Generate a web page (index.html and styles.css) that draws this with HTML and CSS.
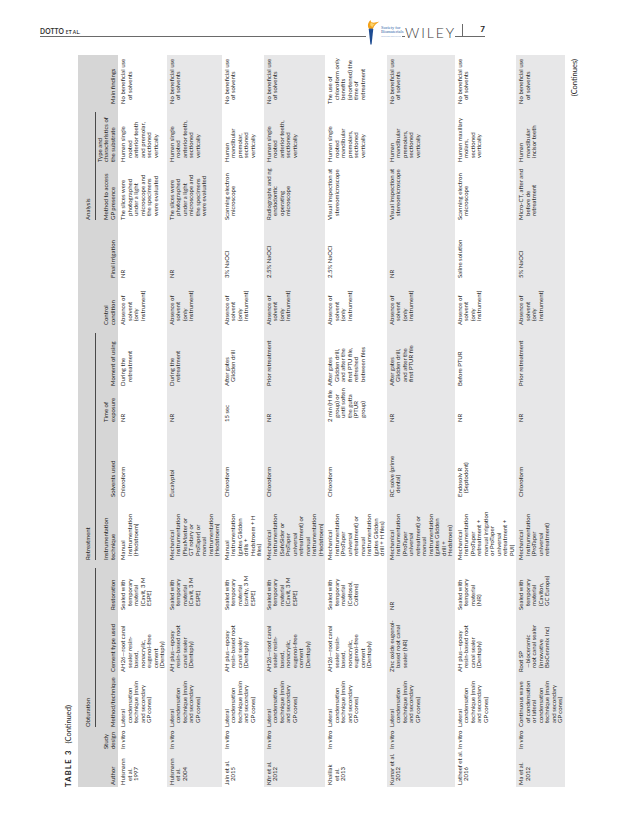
FILE: index.html
```html
<!DOCTYPE html>
<html lang="en">
<head>
<meta charset="utf-8">
<title>Dotto et al. — Table 3 (Continued)</title>
<link rel="stylesheet" href="styles.css">
</head>
<body>
<header class="runhead">
  <div class="rh-left">DOTTO <span class="sc">ET AL.</span></div>
  <svg class="torch" width="14" height="26" viewBox="0 0 14 26" aria-hidden="true">
    <path d="M3.2 10.2 C1.2 7.4 1.6 3.6 4.6 1 C4.4 3.8 7.4 4.6 13.4 2.6 C10.6 4.6 8 6.2 6.8 10.2 Z" fill="#f3a21b"/>
    <path d="M4.4 6.4 C4 4.8 4.6 3.6 5.4 3 C5.6 4.6 7.4 5 9.6 4.6 C8 5.8 7 6.8 6.4 8.2 Z" fill="#fcd36a"/>
    <ellipse cx="5" cy="10.4" rx="2.4" ry="0.9" fill="#2a5fa8"/>
    <path d="M2.8 10.4 L7.2 10.4 L5.6 25.6 L4.4 25.6 Z" fill="#1d4b91"/>
  </svg>
  <div class="society"><span>Society for</span><span>Biomaterials</span><span class="tag">Inspiring Innovation</span></div>
  <div class="dash d1"></div>
  <div class="wiley">WILEY</div>
  <div class="dash d2"></div>
  <div class="rh-right"><span class="pg">7</span></div>
</header>

<main class="landscape">
  <div class="sheet">
    <div class="caption"><span class="tno">TABLE 3</span><span class="cont">(Continued)</span></div>
    <table class="tbl">
      <colgroup>
        <col style="width:36px"><col style="width:22px"><col style="width:55px"><col style="width:62px">
        <col style="width:50px"><col style="width:63px"><col style="width:75px"><col style="width:36px">
        <col style="width:61px"><col style="width:47px"><col style="width:58px"><col style="width:58px">
        <col style="width:58px"><col style="width:51px">
      </colgroup>
      <thead>
        <tr class="hg">
          <th rowspan="2" class="h">Author</th>
          <th rowspan="2" class="h">Study<br>design</th>
          <th colspan="3" class="g"><div class="gl">Obturation</div></th>
          <th colspan="4" class="g"><div class="gl">Retreatment</div></th>
          <th rowspan="2" class="h">Control<br>condition</th>
          <th rowspan="2" class="h">Final irrigation</th>
          <th colspan="2" class="g"><div class="gl">Analysis</div></th>
          <th rowspan="2" class="h">Main findings</th>
        </tr>
        <tr class="hl">
          <th class="h">Method/technique</th>
          <th class="h">Cement type used</th>
          <th class="h">Restoration</th>
          <th class="h">Instrumentation<br>technique</th>
          <th class="h">Solvents used</th>
          <th class="h">Time of<br>exposure</th>
          <th class="h">Moment of using</th>
          <th class="h">Method to access<br>GP presence</th>
          <th class="h">Type and<br>characteristics of<br>the substrate</th>
        </tr>
      </thead>
      <tbody>
        <tr>
          <td>Hulsmann<br>et al.<br>1997</td>
          <td>In vitro</td>
          <td>Lateral<br>condensation<br>technique (main<br>and secondary<br>GP cones)</td>
          <td>AH26—root canal<br>sealer resin-<br>based,<br>nonacrylic,<br>eugenol-free<br>cement<br>(Dentsply)</td>
          <td>Sealed with<br>temporary<br>material<br>(Cavit, 3 M<br>ESPE)</td>
          <td>Manual<br>instrumentation<br>(Hedstroem)</td>
          <td>Chloroform</td>
          <td>NR</td>
          <td>During the<br>retreatment</td>
          <td>Absence of<br>solvent<br>(only<br>instrument)</td>
          <td>NR</td>
          <td>The slices were<br>photographed<br>under a light<br>microscope and<br>the specimens<br>were evaluated</td>
          <td>Human single<br>rooted<br>anterior teeth<br>and premolar,<br>sectioned<br>vertically</td>
          <td>No beneficial use<br>of solvents</td>
        </tr>
        <tr>
          <td>Hulsmann<br>et al.<br>2004</td>
          <td>In vitro</td>
          <td>Lateral<br>condensation<br>technique (main<br>and secondary<br>GP cones)</td>
          <td>AH plus—epoxy<br>resin-based root<br>canal sealer<br>(Dentsply)</td>
          <td>Sealed with<br>temporary<br>material<br>(Cavit, 3 M<br>ESPE)</td>
          <td>Mechanical<br>instrumentation<br>(FlexMaster or<br>GT rotary or<br>ProTaper) or<br>manual<br>instrumentation<br>(Hedstroem)</td>
          <td>Eucalyptol</td>
          <td>NR</td>
          <td>During the<br>retreatment</td>
          <td>Absence of<br>solvent<br>(only<br>instrument)</td>
          <td>NR</td>
          <td>The slices were<br>photographed<br>under a light<br>microscope and<br>the specimens<br>were evaluated</td>
          <td>Human single<br>rooted<br>anterior teeth,<br>sectioned<br>vertically</td>
          <td>No beneficial use<br>of solvents</td>
        </tr>
        <tr>
          <td>Jain et al.<br>2015</td>
          <td>In vitro</td>
          <td>Lateral<br>condensation<br>technique (main<br>and secondary<br>GP cones)</td>
          <td>AH plus—epoxy<br>resin-based root<br>canal sealer<br>(Dentsply)</td>
          <td>Sealed with<br>temporary<br>material<br>(cavity, 3 M<br>ESPE)</td>
          <td>Manual<br>instrumentation<br>(gates Glidden<br>drills +<br>Hedstroem + H<br>files)</td>
          <td>Chloroform</td>
          <td>15 sec</td>
          <td>After gates<br>Glidden drill</td>
          <td>Absence of<br>solvent<br>(only<br>instrument)</td>
          <td>3% NaOCl</td>
          <td>Scanning electron<br>microscope</td>
          <td>Human<br>mandibular<br>premolar,<br>sectioned<br>vertically</td>
          <td>No beneficial use<br>of solvents</td>
        </tr>
        <tr>
          <td>Kfir et al.<br>2012</td>
          <td>In vitro</td>
          <td>Lateral<br>condensation<br>technique (main<br>and secondary<br>GP cones)</td>
          <td>AH26—root canal<br>sealer resin-<br>based,<br>nonacrylic,<br>eugenol-free<br>cement<br>(Dentsply)</td>
          <td>Sealed with<br>temporary<br>material<br>(Cavit, 3 M<br>ESPE)</td>
          <td>Mechanical<br>instrumentation<br>(SafeSider or<br>ProTaper<br>universal<br>retreatment) or<br>manual<br>instrumentation<br>(Hedstroem)</td>
          <td>Chloroform</td>
          <td>NR</td>
          <td>Prior retreatment</td>
          <td>Absence of<br>solvent<br>(only<br>instrument)</td>
          <td>2.5% NaOCl</td>
          <td>Radiographs and ng<br>endodontic<br>operating<br>microscope</td>
          <td>Human single<br>rooted<br>anterior teeth,<br>sectioned<br>vertically</td>
          <td>No beneficial use<br>of solvents</td>
        </tr>
        <tr>
          <td>Khalilak<br>et al.<br>2013</td>
          <td>In vitro</td>
          <td>Lateral<br>condensation<br>technique (main<br>and secondary<br>GP cones)</td>
          <td>AH26—root canal<br>sealer resin-<br>based,<br>nonacrylic,<br>eugenol-free<br>cement<br>(Dentsply)</td>
          <td>Sealed with<br>temporary<br>material<br>(Coltosol,<br>Coltene)</td>
          <td>Mechanical<br>instrumentation<br>(ProTaper<br>universal<br>retreatment) or<br>manual<br>instrumentation<br>(gates Glidden<br>drill + H files)</td>
          <td>Chloroform</td>
          <td>2 min (H file<br>group) or<br>until soften<br>the gutta<br>(PTUR<br>group)</td>
          <td>After gates<br>Glidden drill,<br>and after the<br>first PTU file,<br>refreshed<br>between files</td>
          <td>Absence of<br>solvent<br>(only<br>instrument)</td>
          <td>2.5% NaOCl</td>
          <td>Visual inspection at<br>stereomicroscope</td>
          <td>Human single<br>rooted<br>mandibular<br>premolars,<br>sectioned<br>vertically</td>
          <td>The use of<br>chloroform only<br>benefits<br>(shortened) the<br>time of<br>retreatment</td>
        </tr>
        <tr>
          <td>Kumar et al.<br>2012</td>
          <td>In vitro</td>
          <td>Lateral<br>condensation<br>technique (main<br>and secondary<br>GP cones)</td>
          <td>Zinc oxide eugenol-<br>based root canal<br>sealer (NR)</td>
          <td>NR</td>
          <td>Mechanical<br>instrumentation<br>(ProTaper<br>universal<br>retreatment) or<br>manual<br>instrumentation<br>(gates Glidden<br>drill +<br>Hedstroem)</td>
          <td>RC solve (prime<br>dental)</td>
          <td>NR</td>
          <td>After gates<br>Glidden drill,<br>and after the<br>first PTUR file</td>
          <td>Absence of<br>solvent<br>(only<br>instrument)</td>
          <td>NR</td>
          <td>Visual inspection at<br>stereomicroscope</td>
          <td>Human<br>mandibular<br>premolars,<br>sectioned<br>vertically</td>
          <td>No beneficial use<br>of solvents</td>
        </tr>
        <tr>
          <td>Latheef et al.<br>2016</td>
          <td>In vitro</td>
          <td>Lateral<br>condensation<br>technique (main<br>and secondary<br>GP cones)</td>
          <td>AH plus—epoxy<br>resin-based root<br>canal sealer<br>(Dentsply)</td>
          <td>Sealed with<br>temporary<br>material<br>(NR)</td>
          <td>Mechanical<br>instrumentation<br>(ProTaper<br>retreatment +<br>manual irrigation<br>or ProTaper<br>universal<br>retreatment +<br>PUI)</td>
          <td>Endosolv R<br>(Septodont)</td>
          <td>NR</td>
          <td>Before PTUR</td>
          <td>Absence of<br>solvent<br>(only<br>instrument)</td>
          <td>Saline solution</td>
          <td>Scanning electron<br>microscope</td>
          <td>Human maxillary<br>molars,<br>sectioned<br>vertically</td>
          <td>No beneficial use<br>of solvents</td>
        </tr>
        <tr>
          <td>Ma et al.<br>2012</td>
          <td>In vitro</td>
          <td>Continuous wave<br>of condensation<br>or lateral<br>condensation<br>technique (main<br>and secondary<br>GP cones)</td>
          <td>Root SP<br>—bioceramic<br>root canal sealer<br>(innovative<br>BioCeramix Inc)</td>
          <td>Sealed with<br>temporary<br>material<br>(Caviton,<br>GC Europe)</td>
          <td>Mechanical<br>instrumentation<br>(ProTaper<br>universal<br>retreatment)</td>
          <td>Chloroform</td>
          <td>NR</td>
          <td>Prior retreatment</td>
          <td>Absence of<br>solvent<br>(only<br>instrument)</td>
          <td>5% NaOCl</td>
          <td>Micro-CT, after and<br>before de<br>retreatment</td>
          <td>Human<br>mandibular<br>incisor teeth</td>
          <td>No beneficial use<br>of solvents</td>
        </tr>
      </tbody>
    </table>
    <div class="continues">(Continues)</div>
  </div>
</main>
</body>
</html>
```

FILE: styles.css
```css
html, body {
  margin: 0;
  padding: 0;
  background: #ffffff;
}
body {
  width: 638px;
  height: 839px;
  overflow: hidden;
  font-family: Lato, "Liberation Sans", sans-serif;
  color: #262626;
}

/* running head */
.runhead {
  display: flex;
  align-items: flex-end;
  box-sizing: border-box;
  height: 45px;
  padding: 0 153px 0 40px;
}
.rh-left {
  flex: 1;
  margin-bottom: 8px;
  border-bottom: 1px solid #6a6a6a;
  font-size: 6.6px;
  font-weight: 700;
  line-height: 8px;
  letter-spacing: 0.15px;
  color: #333;
}
.rh-left .sc {
  font-size: 4.8px;
  letter-spacing: 0.2px;
}
.torch {
  display: block;
  flex: none;
}
.society {
  flex: none;
  width: 21px;
  margin: 0 0 7px 1px;
  display: flex;
  flex-direction: column;
  font-family: "Liberation Serif", serif;
  font-size: 4.4px;
  line-height: 4.6px;
  color: #2d5ea6;
  white-space: nowrap;
}
.society .tag {
  font-size: 2.4px;
  line-height: 3px;
  color: #8aa6cf;
}
.dash {
  flex: none;
  margin-bottom: 8px;
  border-bottom: 1px solid #6a6a6a;
}
.d1 { width: 3px; }
.d2 { width: 7px; }
.wiley {
  flex: none;
  width: 50px;
  margin-bottom: 5px;
  font-family: Lato, "Liberation Sans", sans-serif;
  font-weight: 300;
  font-size: 14px;
  line-height: 14px;
  letter-spacing: 1.9px;
  color: #3b3b3b;
  white-space: nowrap;
}
.rh-right {
  flex: none;
  width: 23px;
  height: 13px;
  margin-bottom: 8px;
  box-sizing: border-box;
  border-left: 1px solid #6a6a6a;
  border-bottom: 1px solid #6a6a6a;
  display: flex;
  justify-content: flex-end;
  align-items: flex-start;
}
.pg {
  font-size: 8px;
  font-weight: 700;
  line-height: 9px;
  margin-top: 1px;
  color: #222;
}

/* rotated landscape table */
.landscape {
  display: block;
  width: 522px;
  height: 732px;
  margin: 10px 0 0 60px;
}
.sheet {
  width: 732px;
  height: 522px;
  transform-origin: 0 0;
  transform: translateY(732px) rotate(-90deg);
}
.caption {
  height: 18px;
  line-height: 18px;
  font-size: 7.5px;
  color: #222;
  white-space: nowrap;
}
.caption .tno {
  font-weight: 700;
  letter-spacing: 1.3px;
  margin-right: 6px;
}
.tbl {
  width: 732px;
  table-layout: fixed;
  border-collapse: collapse;
  border-spacing: 0;
  font-size: 6px;
  line-height: 6.5px;
}
.tbl thead {
  background: #d6d6d6;
}
.tbl th {
  font-weight: 400;
  text-align: left;
  white-space: nowrap;
  color: #222;
}
.tbl tr.hg { height: 18px; }
.tbl tr.hl { height: 22px; }
.tbl th.g {
  vertical-align: top;
  padding: 6px 0 0 2px;
}
.tbl .gl {
  line-height: 8px;
  padding-bottom: 3px;
  margin-right: 6px;
  border-bottom: 1px solid #4a4a4a;
}
.tbl th.h {
  vertical-align: bottom;
  padding: 0 1px 2px 2px;
}
.tbl td {
  vertical-align: top;
  white-space: nowrap;
  padding: 2px 1px 1px 6px;
  text-indent: -4px;
  color: #2a2a2a;
}
.tbl tbody tr:nth-child(even) {
  background: #e7e7e8;
}
.continues {
  margin-top: 4px;
  padding-right: 4px;
  text-align: right;
  font-size: 7.5px;
  line-height: 12px;
  color: #222;
}
```
